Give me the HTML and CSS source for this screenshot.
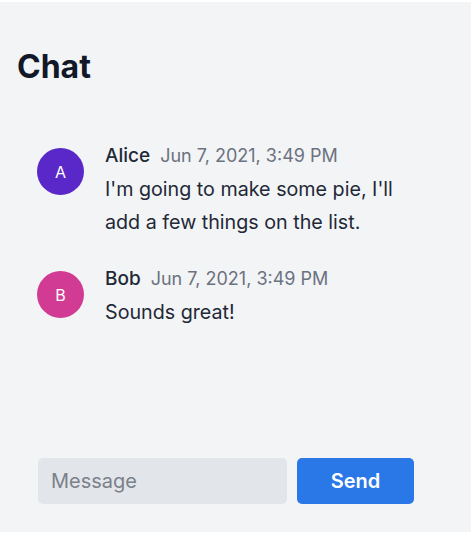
FILE: index.html
```html
<!DOCTYPE html>
<html lang="en">
<head>
<meta charset="utf-8">
<title>Chat</title>
<link rel="stylesheet" href="styles.css">
</head>
<body>
<div class="panel">
  <h1 class="title">Chat</h1>
  <ul class="messages">
    <li class="message">
      <div class="avatar avatar-a">A</div>
      <div class="content">
        <div class="meta"><span class="name">Alice</span><span class="date">Jun 7, 2021, 3:49 PM</span></div>
        <p class="text">I'm going to make some pie, I'll add a few things on the list.</p>
      </div>
    </li>
    <li class="message">
      <div class="avatar avatar-b">B</div>
      <div class="content">
        <div class="meta"><span class="name">Bob</span><span class="date">Jun 7, 2021, 3:49 PM</span></div>
        <p class="text">Sounds great!</p>
      </div>
    </li>
  </ul>
  <form class="composer">
    <input class="input" type="text" placeholder="Message">
    <button class="send" type="button">Send</button>
  </form>
</div>
</body>
</html>
```

FILE: styles.css
```css
html, body {
  margin: 0;
  padding: 0;
  background: #ffffff;
}
body {
  font-family: Inter, "Noto Sans", "Liberation Sans", sans-serif;
  color: #1f2937;
}
.panel {
  box-sizing: border-box;
  width: 471px;
  height: 530px;
  margin-top: 2px;
  background: #f3f4f6;
  padding: 0 17px;
  display: flex;
  flex-direction: column;
}
.title {
  margin: 47px 0 0 0;
  font-size: 32px;
  line-height: 36px;
  font-weight: 700;
  color: #111827;
}
.messages {
  list-style: none;
  margin: 54px 0 0 0;
  padding: 0 0 0 20px;
  display: flex;
  flex-direction: column;
  gap: 23px;
}
.message {
  display: flex;
  align-items: flex-start;
  gap: 21px;
}
.avatar {
  flex: none;
  width: 47px;
  height: 47px;
  margin-top: 9px;
  border-radius: 50%;
  color: #ffffff;
  font-size: 16px;
  font-weight: 400;
  display: flex;
  align-items: center;
  justify-content: center;
}
.avatar-a { background: #5a28c8; }
.avatar-b { background: #d23b94; }
.content {
  flex: 1;
  min-width: 0;
}
.meta {
  line-height: 33px;
}
.name {
  font-size: 19px;
  font-weight: 500;
  color: #1f2937;
}
.date {
  margin-left: 10px;
  font-size: 18px;
  color: #6b7280;
}
.text {
  margin: 0;
  font-size: 19.7px;
  line-height: 33px;
  color: #1f2937;
  max-width: 305px;
}
.composer {
  margin: auto 0 28px 21px;
  display: flex;
  gap: 10px;
}
.input {
  box-sizing: border-box;
  width: 249px;
  height: 46px;
  border: none;
  border-radius: 5px;
  background: #e2e5ea;
  padding: 0 13px;
  font-family: inherit;
  font-size: 20px;
  color: #1f2937;
  outline: none;
}
.input::placeholder {
  color: #7b8089;
}
.send {
  box-sizing: border-box;
  width: 117px;
  height: 46px;
  border: none;
  border-radius: 5px;
  background: #2a77e8;
  color: #ffffff;
  font-family: inherit;
  font-size: 20px;
  font-weight: 600;
}
```
